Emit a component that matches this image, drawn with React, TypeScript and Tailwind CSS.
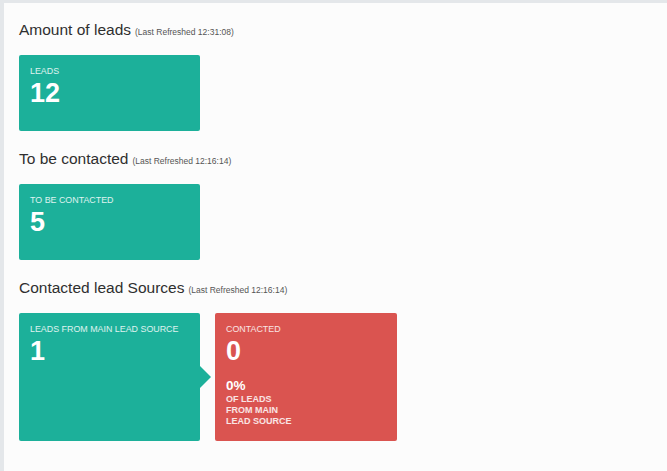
import React from "react";

const font = { fontFamily: '"Liberation Sans", Arial, sans-serif' };

function Heading({ title, time }: { title: string; time: string }) {
  return (
    <div className="h-[20px] flex items-center whitespace-nowrap">
      <span className="text-[15.5px] text-[#2f2f2f] leading-none">{title}</span>
      <span className="text-[8.5px] text-[#555] ml-[4px] leading-none mt-[4px]">(Last Refreshed {time})</span>
    </div>
  );
}

function StatBox({ label, value, tall }: { label: string; value: string; tall?: boolean }) {
  return (
    <div className={`w-[181px] ${tall ? "h-[128px]" : "h-[76px]"} bg-[#1cb09a] rounded-[2px] px-[11px] pt-[12px]`}>
      <div className="text-[8.9px] leading-none text-white/85 uppercase">{label}</div>
      <div className="text-[27px] font-bold leading-none text-white mt-[4px]">{value}</div>
    </div>
  );
}

export default function App() {
  return (
    <div className="w-[667px] h-[471px] bg-[#e4e7ea] pt-[3px] pl-[4px] overflow-hidden" style={font}>
      <div className="bg-[#fcfcfc] h-[468px] pl-[15px] pt-[17px]">
        <Heading title="Amount of leads" time="12:31:08" />
        <div className="mt-[15px]">
          <StatBox label="Leads" value="12" />
        </div>
        <div className="mt-[18px]">
          <Heading title="To be contacted" time="12:16:14" />
        </div>
        <div className="mt-[15px]">
          <StatBox label="To be contacted" value="5" />
        </div>
        <div className="mt-[18px]">
          <Heading title="Contacted lead Sources" time="12:16:14" />
        </div>
        <div className="mt-[15px] flex">
          <div className="relative">
            <StatBox label="Leads from main lead source" value="1" tall />
            <div className="absolute left-full top-1/2 -translate-y-1/2 w-0 h-0 border-y-[11px] border-y-transparent border-l-[11px] border-l-[#1cb09a]" />
          </div>
          <div className="ml-[15px] w-[182px] h-[128px] bg-[#da5450] rounded-[2px] px-[11px] pt-[12px]">
            <div className="text-[8.9px] leading-none text-white/85 uppercase">Contacted</div>
            <div className="text-[27px] font-bold leading-none text-white mt-[4px]">0</div>
            <div className="text-[13.5px] font-bold leading-none text-white mt-[14px]">0%</div>
            <div className="text-[9px] font-bold leading-[11px] text-white/85 uppercase mt-[2px]">
              Of leads<br />from main<br />lead source
            </div>
          </div>
        </div>
      </div>
    </div>
  );
}
